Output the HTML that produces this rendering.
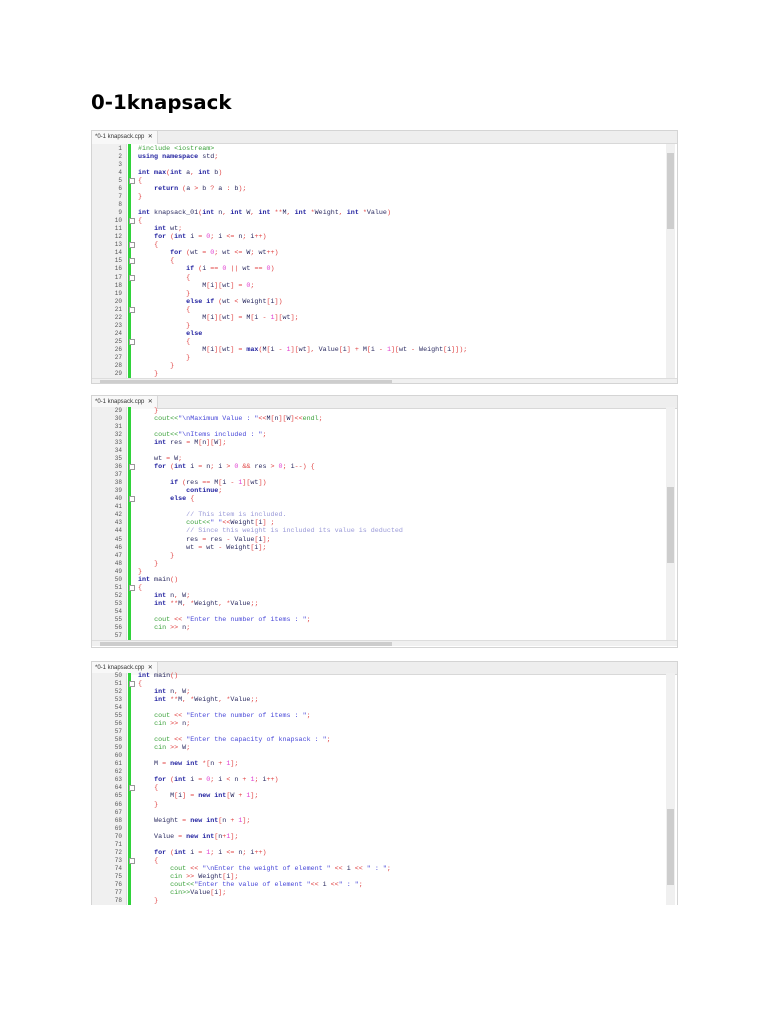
<!DOCTYPE html>
<html><head><meta charset="utf-8"><style>
*{margin:0;padding:0;box-sizing:border-box}
body{width:768px;height:1024px;background:#fff;position:relative;overflow:hidden;font-family:"Liberation Sans",sans-serif}
h1{position:absolute;left:91px;top:91px;font-family:"DejaVu Sans",sans-serif;font-weight:bold;font-size:19.8px;color:#000;letter-spacing:0}
.pn{position:absolute;left:91px;width:587px;border:1px solid #d4d4d4;background:#fff;overflow:hidden}
.tb{position:absolute;left:0;top:0;right:0;height:13px;background:#eeeeee;border-bottom:1px solid #d8d8d8}
.tab{position:absolute;left:0;top:0;height:13px;width:66px;background:#f8f8f8;border-right:1px solid #d8d8d8;font-size:6px;color:#333;line-height:13px;padding-left:3px;white-space:nowrap}
.gut{position:absolute;left:0;width:35px;background:#f0f0f0;border-right:1px solid #ddd}
.gb{position:absolute;left:36px;width:2.5px;background:#2fd23a}
.code{position:absolute;left:0;font-family:"Liberation Mono",monospace;font-size:6.7px;color:#2a2a60;white-space:normal}
.code div{height:8.04px;line-height:8.04px;position:relative}
.code i{font-style:normal;position:absolute;left:0;width:30px;text-align:right;color:#555;font-size:6px}
.code u{text-decoration:none;position:absolute;left:46px;white-space:pre}
.fb{position:absolute;left:37px;top:1px;width:6px;height:6px;border:1px solid #999;background:#fff}
.k{color:#1e1e9e;font-weight:bold}.g{color:#3aa13a}.s{color:#4848d8}.c{color:#9a9ad8}.r{color:#e04040}.n{color:#e040d0}
.vs{position:absolute;right:2px;width:9px;background:#f0f0f0}
.th{position:absolute;left:1px;width:7px;background:#cdcdcd}
.hs{position:absolute;left:0;right:0;height:6px;background:#f0f0f0;border-top:1px solid #ddd}
.ht{position:absolute;left:8px;width:292px;top:1px;height:4px;background:#cdcdcd}
</style></head><body>
<h1>0-1knapsack</h1>

<div class="pn" style="top:130px;height:254px">
<div class="tb"><div class="tab">*0-1 knapsack.cpp &nbsp;✕</div></div>
<div class="gut" style="top:13px;height:235px"></div>
<div class="gb" style="top:13px;height:235px"></div>
<div class="code" style="top:14px;left:0;width:570px">
<div><i>1</i><u><span class="g">#include &lt;iostream&gt;</span></u></div>
<div><i>2</i><u><span class="k">using namespace</span> std<span class="r">;</span></u></div>
<div><i>3</i></div>
<div><i>4</i><u><span class="k">int max</span><span class="r">(</span><span class="k">int</span> a<span class="r">,</span> <span class="k">int</span> b<span class="r">)</span></u></div>
<div><i>5</i><b class="fb"></b><u><span class="r">{</span></u></div>
<div><i>6</i><u>    <span class="k">return</span> <span class="r">(</span>a <span class="r">&gt;</span> b <span class="r">?</span> a <span class="r">:</span> b<span class="r">);</span></u></div>
<div><i>7</i><u><span class="r">}</span></u></div>
<div><i>8</i></div>
<div><i>9</i><u><span class="k">int</span> knapsack_01<span class="r">(</span><span class="k">int</span> n<span class="r">,</span> <span class="k">int</span> W<span class="r">,</span> <span class="k">int</span> <span class="r">**</span>M<span class="r">,</span> <span class="k">int</span> <span class="r">*</span>Weight<span class="r">,</span> <span class="k">int</span> <span class="r">*</span>Value<span class="r">)</span></u></div>
<div><i>10</i><b class="fb"></b><u><span class="r">{</span></u></div>
<div><i>11</i><u>    <span class="k">int</span> wt<span class="r">;</span></u></div>
<div><i>12</i><u>    <span class="k">for</span> <span class="r">(</span><span class="k">int</span> i <span class="r">=</span> <span class="n">0</span><span class="r">;</span> i <span class="r">&lt;=</span> n<span class="r">;</span> i<span class="r">++)</span></u></div>
<div><i>13</i><b class="fb"></b><u>    <span class="r">{</span></u></div>
<div><i>14</i><u>        <span class="k">for</span> <span class="r">(</span>wt <span class="r">=</span> <span class="n">0</span><span class="r">;</span> wt <span class="r">&lt;=</span> W<span class="r">;</span> wt<span class="r">++)</span></u></div>
<div><i>15</i><b class="fb"></b><u>        <span class="r">{</span></u></div>
<div><i>16</i><u>            <span class="k">if</span> <span class="r">(</span>i <span class="r">==</span> <span class="n">0</span> <span class="r">||</span> wt <span class="r">==</span> <span class="n">0</span><span class="r">)</span></u></div>
<div><i>17</i><b class="fb"></b><u>            <span class="r">{</span></u></div>
<div><i>18</i><u>                M<span class="r">[</span>i<span class="r">][</span>wt<span class="r">]</span> <span class="r">=</span> <span class="n">0</span><span class="r">;</span></u></div>
<div><i>19</i><u>            <span class="r">}</span></u></div>
<div><i>20</i><u>            <span class="k">else if</span> <span class="r">(</span>wt <span class="r">&lt;</span> Weight<span class="r">[</span>i<span class="r">])</span></u></div>
<div><i>21</i><b class="fb"></b><u>            <span class="r">{</span></u></div>
<div><i>22</i><u>                M<span class="r">[</span>i<span class="r">][</span>wt<span class="r">]</span> <span class="r">=</span> M<span class="r">[</span>i <span class="r">-</span> <span class="n">1</span><span class="r">][</span>wt<span class="r">];</span></u></div>
<div><i>23</i><u>            <span class="r">}</span></u></div>
<div><i>24</i><u>            <span class="k">else</span></u></div>
<div><i>25</i><b class="fb"></b><u>            <span class="r">{</span></u></div>
<div><i>26</i><u>                M<span class="r">[</span>i<span class="r">][</span>wt<span class="r">]</span> <span class="r">=</span> <span class="k">max</span><span class="r">(</span>M<span class="r">[</span>i <span class="r">-</span> <span class="n">1</span><span class="r">][</span>wt<span class="r">],</span> Value<span class="r">[</span>i<span class="r">]</span> <span class="r">+</span> M<span class="r">[</span>i <span class="r">-</span> <span class="n">1</span><span class="r">][</span>wt <span class="r">-</span> Weight<span class="r">[</span>i<span class="r">]]);</span></u></div>
<div><i>27</i><u>            <span class="r">}</span></u></div>
<div><i>28</i><u>        <span class="r">}</span></u></div>
<div><i>29</i><u>    <span class="r">}</span></u></div>
</div>
<div class="vs" style="top:13px;height:235px"><div class="th" style="top:9px;height:76px"></div></div>
<div class="hs" style="top:247px"><div class="ht"></div></div>
</div>

<div class="pn" style="top:395px;height:253px">
<div class="tb"><div class="tab">*0-1 knapsack.cpp &nbsp;✕</div></div>
<div class="gut" style="top:11px;height:233px"></div>
<div class="gb" style="top:11px;height:233px"></div>
<div class="code" style="top:11px;width:570px">
<div><i>29</i><u>    <span class="r">}</span></u></div>
<div><i>30</i><u>    <span class="g">cout&lt;&lt;</span><span class="s">"\nMaximum Value : "</span><span class="r">&lt;&lt;</span>M<span class="r">[</span>n<span class="r">][</span>W<span class="r">]&lt;&lt;</span><span class="g">endl</span><span class="r">;</span></u></div>
<div><i>31</i></div>
<div><i>32</i><u>    <span class="g">cout&lt;&lt;</span><span class="s">"\nItems included : "</span><span class="r">;</span></u></div>
<div><i>33</i><u>    <span class="k">int</span> res <span class="r">=</span> M<span class="r">[</span>n<span class="r">][</span>W<span class="r">];</span></u></div>
<div><i>34</i></div>
<div><i>35</i><u>    wt <span class="r">=</span> W<span class="r">;</span></u></div>
<div><i>36</i><b class="fb"></b><u>    <span class="k">for</span> <span class="r">(</span><span class="k">int</span> i <span class="r">=</span> n<span class="r">;</span> i <span class="r">&gt;</span> <span class="n">0</span> <span class="r">&amp;&amp;</span> res <span class="r">&gt;</span> <span class="n">0</span><span class="r">;</span> i<span class="r">--)</span> <span class="r">{</span></u></div>
<div><i>37</i></div>
<div><i>38</i><u>        <span class="k">if</span> <span class="r">(</span>res <span class="r">==</span> M<span class="r">[</span>i <span class="r">-</span> <span class="n">1</span><span class="r">][</span>wt<span class="r">])</span></u></div>
<div><i>39</i><u>            <span class="k">continue</span><span class="r">;</span></u></div>
<div><i>40</i><b class="fb"></b><u>        <span class="k">else</span> <span class="r">{</span></u></div>
<div><i>41</i></div>
<div><i>42</i><u>            <span class="c">// This item is included.</span></u></div>
<div><i>43</i><u>            <span class="g">cout&lt;&lt;</span><span class="s">" "</span><span class="r">&lt;&lt;</span>Weight<span class="r">[</span>i<span class="r">]</span> <span class="r">;</span></u></div>
<div><i>44</i><u>            <span class="c">// Since this weight is included its value is deducted</span></u></div>
<div><i>45</i><u>            res <span class="r">=</span> res <span class="r">-</span> Value<span class="r">[</span>i<span class="r">];</span></u></div>
<div><i>46</i><u>            wt <span class="r">=</span> wt <span class="r">-</span> Weight<span class="r">[</span>i<span class="r">];</span></u></div>
<div><i>47</i><u>        <span class="r">}</span></u></div>
<div><i>48</i><u>    <span class="r">}</span></u></div>
<div><i>49</i><u><span class="r">}</span></u></div>
<div><i>50</i><u><span class="k">int</span> main<span class="r">()</span></u></div>
<div><i>51</i><b class="fb"></b><u><span class="r">{</span></u></div>
<div><i>52</i><u>    <span class="k">int</span> n<span class="r">,</span> W<span class="r">;</span></u></div>
<div><i>53</i><u>    <span class="k">int</span> <span class="r">**</span>M<span class="r">,</span> <span class="r">*</span>Weight<span class="r">,</span> <span class="r">*</span>Value<span class="r">;;</span></u></div>
<div><i>54</i></div>
<div><i>55</i><u>    <span class="g">cout</span> <span class="r">&lt;&lt;</span> <span class="s">"Enter the number of items : "</span><span class="r">;</span></u></div>
<div><i>56</i><u>    <span class="g">cin</span> <span class="r">&gt;&gt;</span> n<span class="r">;</span></u></div>
<div><i>57</i></div>
</div>
<div class="vs" style="top:11px;height:233px"><div class="th" style="top:80px;height:76px"></div></div>
<div class="hs" style="top:244px"><div class="ht"></div></div>
</div>

<div class="pn" style="top:661px;height:244px;border-bottom:none">
<div class="tb"><div class="tab">*0-1 knapsack.cpp &nbsp;✕</div></div>
<div class="gut" style="top:11px;height:233px"></div>
<div class="gb" style="top:11px;height:233px"></div>
<div class="code" style="top:10px;width:570px">
<div><i>50</i><u><span class="k">int</span> main<span class="r">()</span></u></div>
<div><i>51</i><b class="fb"></b><u><span class="r">{</span></u></div>
<div><i>52</i><u>    <span class="k">int</span> n<span class="r">,</span> W<span class="r">;</span></u></div>
<div><i>53</i><u>    <span class="k">int</span> <span class="r">**</span>M<span class="r">,</span> <span class="r">*</span>Weight<span class="r">,</span> <span class="r">*</span>Value<span class="r">;;</span></u></div>
<div><i>54</i></div>
<div><i>55</i><u>    <span class="g">cout</span> <span class="r">&lt;&lt;</span> <span class="s">"Enter the number of items : "</span><span class="r">;</span></u></div>
<div><i>56</i><u>    <span class="g">cin</span> <span class="r">&gt;&gt;</span> n<span class="r">;</span></u></div>
<div><i>57</i></div>
<div><i>58</i><u>    <span class="g">cout</span> <span class="r">&lt;&lt;</span> <span class="s">"Enter the capacity of knapsack : "</span><span class="r">;</span></u></div>
<div><i>59</i><u>    <span class="g">cin</span> <span class="r">&gt;&gt;</span> W<span class="r">;</span></u></div>
<div><i>60</i></div>
<div><i>61</i><u>    M <span class="r">=</span> <span class="k">new int</span> <span class="r">*[</span>n <span class="r">+</span> <span class="n">1</span><span class="r">];</span></u></div>
<div><i>62</i></div>
<div><i>63</i><u>    <span class="k">for</span> <span class="r">(</span><span class="k">int</span> i <span class="r">=</span> <span class="n">0</span><span class="r">;</span> i <span class="r">&lt;</span> n <span class="r">+</span> <span class="n">1</span><span class="r">;</span> i<span class="r">++)</span></u></div>
<div><i>64</i><b class="fb"></b><u>    <span class="r">{</span></u></div>
<div><i>65</i><u>        M<span class="r">[</span>i<span class="r">]</span> <span class="r">=</span> <span class="k">new int</span><span class="r">[</span>W <span class="r">+</span> <span class="n">1</span><span class="r">];</span></u></div>
<div><i>66</i><u>    <span class="r">}</span></u></div>
<div><i>67</i></div>
<div><i>68</i><u>    Weight <span class="r">=</span> <span class="k">new int</span><span class="r">[</span>n <span class="r">+</span> <span class="n">1</span><span class="r">];</span></u></div>
<div><i>69</i></div>
<div><i>70</i><u>    Value <span class="r">=</span> <span class="k">new int</span><span class="r">[</span>n<span class="r">+</span><span class="n">1</span><span class="r">];</span></u></div>
<div><i>71</i></div>
<div><i>72</i><u>    <span class="k">for</span> <span class="r">(</span><span class="k">int</span> i <span class="r">=</span> <span class="n">1</span><span class="r">;</span> i <span class="r">&lt;=</span> n<span class="r">;</span> i<span class="r">++)</span></u></div>
<div><i>73</i><b class="fb"></b><u>    <span class="r">{</span></u></div>
<div><i>74</i><u>        <span class="g">cout</span> <span class="r">&lt;&lt;</span> <span class="s">"\nEnter the weight of element "</span> <span class="r">&lt;&lt;</span> i <span class="r">&lt;&lt;</span> <span class="s">" : "</span><span class="r">;</span></u></div>
<div><i>75</i><u>        <span class="g">cin</span> <span class="r">&gt;&gt;</span> Weight<span class="r">[</span>i<span class="r">];</span></u></div>
<div><i>76</i><u>        <span class="g">cout&lt;&lt;</span><span class="s">"Enter the value of element "</span><span class="r">&lt;&lt;</span> i <span class="r">&lt;&lt;</span><span class="s">" : "</span><span class="r">;</span></u></div>
<div><i>77</i><u>        <span class="g">cin&gt;&gt;</span>Value<span class="r">[</span>i<span class="r">];</span></u></div>
<div><i>78</i><u>    <span class="r">}</span></u></div>
</div>
<div class="vs" style="top:11px;height:233px"><div class="th" style="top:136px;height:76px"></div></div>
</div>
</body></html>
